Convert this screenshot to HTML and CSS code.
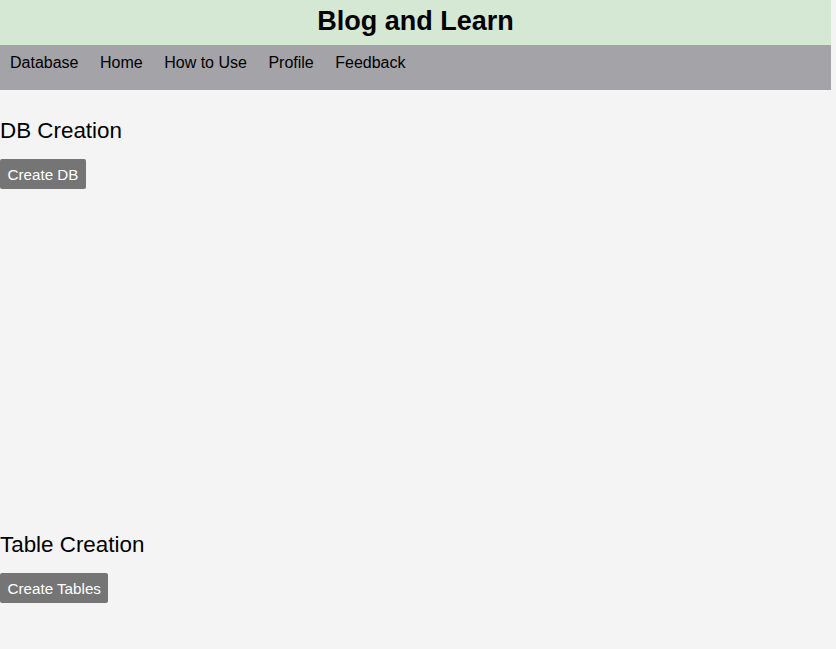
FILE: index.html
```html
<!DOCTYPE html>
<html>
<head>
<meta charset="utf-8">
<title>Blog and Learn</title>
<link rel="stylesheet" href="styles.css">
</head>
<body>
<header class="site-header">
  <h1 class="site-title">Blog and Learn</h1>
</header>
<nav class="site-nav">
  <a href="#">Database</a>
  <a href="#">Home</a>
  <a href="#">How to Use</a>
  <a href="#">Profile</a>
  <a href="#">Feedback</a>
</nav>
<main class="content">
  <section class="block">
    <h2 class="block-title">DB Creation</h2>
    <button class="btn">Create DB</button>
  </section>
  <section class="block block-last">
    <h2 class="block-title">Table Creation</h2>
    <button class="btn">Create Tables</button>
  </section>
</main>
</body>
</html>
```
FILE: styles.css
```css
html, body {
  margin: 0;
  padding: 0;
  background: #f4f4f4;
  font-family: "Liberation Sans", Arial, sans-serif;
  color: #000;
}
.site-header {
  width: 831px;
  height: 45px;
  background: #d5e8d4;
  display: flex;
  align-items: center;
  justify-content: center;
}
.site-title {
  margin: 0;
  font-size: 27px;
  font-weight: bold;
  line-height: 31px;
  padding-bottom: 2px;
}
.site-nav {
  width: 831px;
  height: 45px;
  background: #a4a3a7;
  display: flex;
  gap: 21.5px;
  padding-left: 10px;
  box-sizing: border-box;
  padding-top: 9px;
}
.site-nav a {
  color: #000;
  text-decoration: none;
  font-size: 16px;
  line-height: 18px;
}
.block {
  height: 414px;
  box-sizing: border-box;
  padding-top: 28px;
}
.block-last {
  height: auto;
  padding-bottom: 40px;
}
.block-title {
  margin: 0 0 16px 0;
  font-size: 22.4px;
  font-weight: normal;
  line-height: 25px;
}
.btn {
  display: block;
  height: 30px;
  padding: 0 7.5px;
  border: none;
  border-radius: 2px;
  background: #757575;
  color: #fff;
  font-family: "Liberation Sans", Arial, sans-serif;
  font-size: 15.2px;
  cursor: pointer;
}
```
